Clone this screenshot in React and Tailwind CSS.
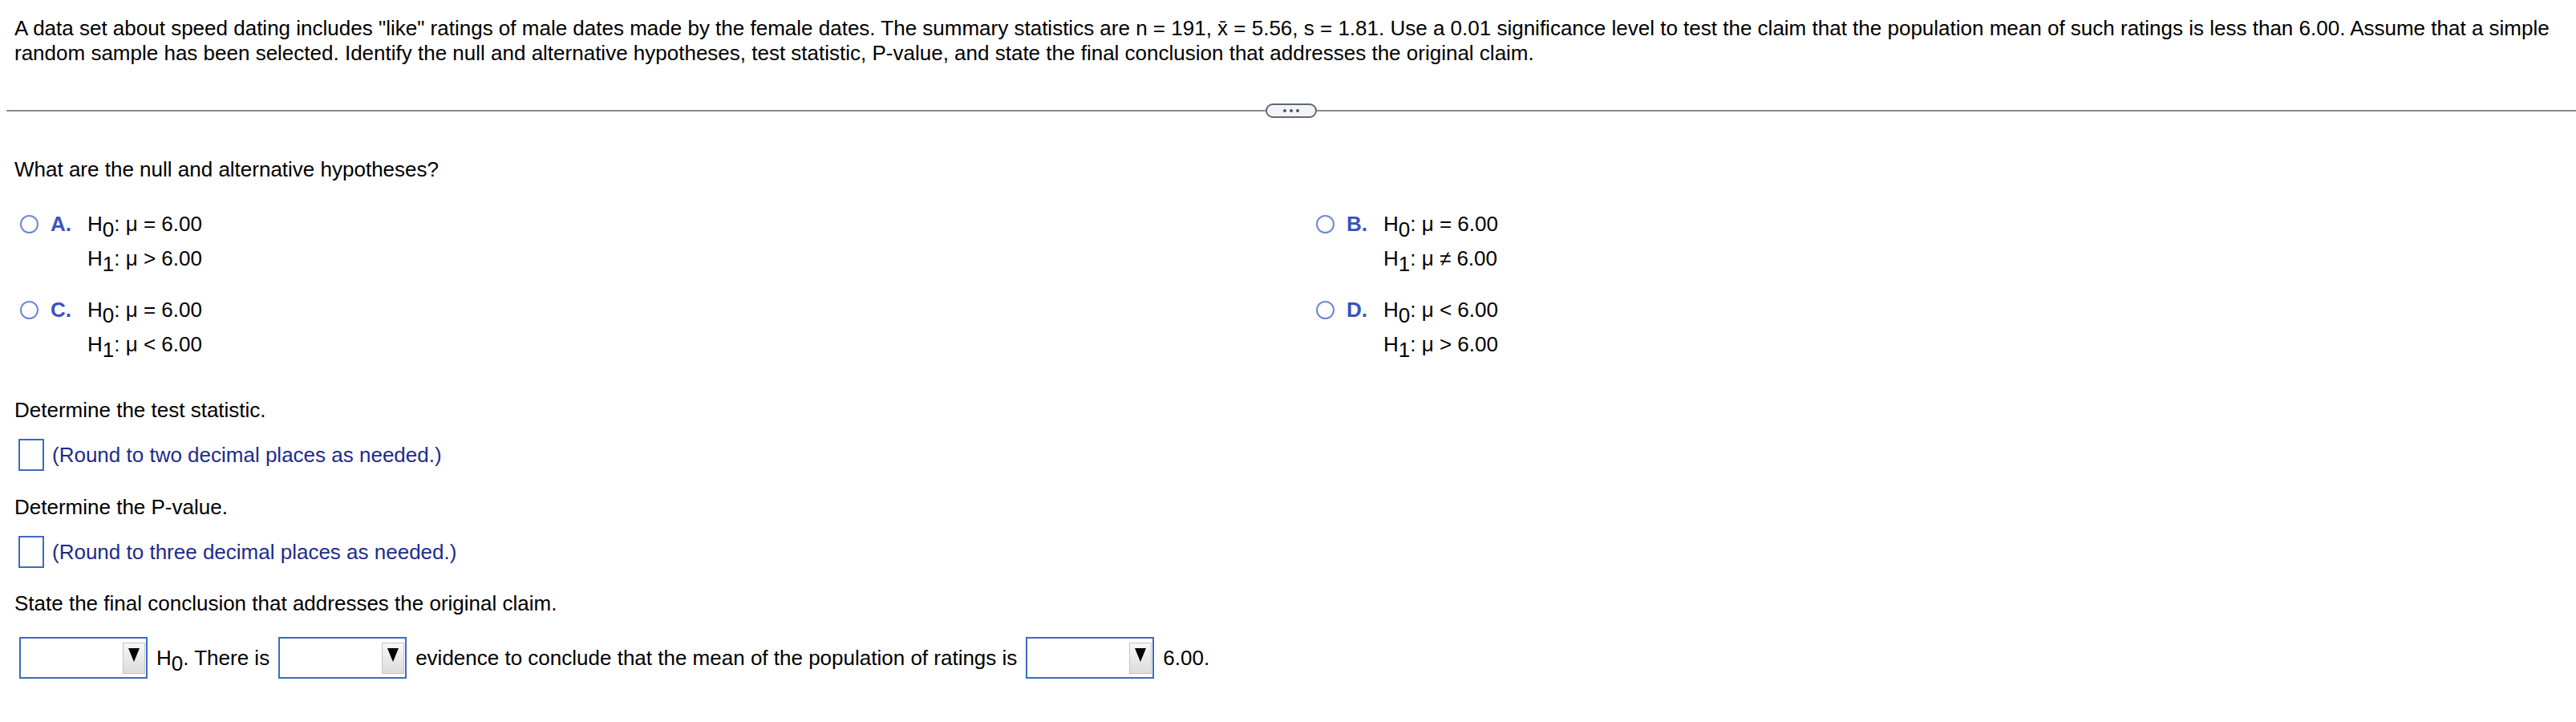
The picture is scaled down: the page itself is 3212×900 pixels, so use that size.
const H = ({ n }) => (
  <span>
    H<span className="relative top-[7px]">{n}</span>
  </span>
);

const Radio = () => (
  <span className="inline-block w-[23px] h-[23px] rounded-full border-[2.5px] border-[#6d88d8] bg-white shrink-0" />
);

const Option = ({ letter, h0, h1 }) => (
  <div className="flex">
    <div className="h-[43px] flex items-center">
      <Radio />
    </div>
    <div className="w-[46px] ml-[15px] font-bold text-[#3853bf]">{letter}.</div>
    <div className="flex flex-col">
      <div>
        <H n="0" />: μ {h0}
      </div>
      <div>
        <H n="1" />: μ {h1}
      </div>
    </div>
  </div>
);

const AnswerBox = ({ hint }) => (
  <div className="flex items-center">
    <div className="ml-[23px] w-[32px] h-[40px] border-2 border-[#3a6bc4] bg-white" />
    <span className="ml-[10px] text-[#1d2b8c]">{hint}</span>
  </div>
);

const Dropdown = () => (
  <div className="relative w-[160px] h-[52px] border-2 border-[#3a6bc4] bg-white shrink-0">
    <div className="absolute right-[1px] top-[5px] w-[28px] h-[39px] border border-[#c4c4c4] bg-gradient-to-b from-[#f7f7f7] to-[#dcdcdc] flex items-start justify-center pt-[4px]">
      <svg width="16" height="20" viewBox="0 0 16 20">
        <polygon points="1,2 15,2 8,19" fill="#000" />
      </svg>
    </div>
  </div>
);

const App = () => {
  return (
    <div
      className="w-[3212px] min-h-[900px] bg-white text-black text-[26px] leading-[31px]"
      style={{ fontFamily: '"Liberation Sans", Arial, sans-serif' }}
    >
      <div className="px-[18px] pt-[20px]">
        <div className="whitespace-nowrap">
          A data set about speed dating includes "like" ratings of male dates made by the female
          dates. The summary statistics are n = 191, x̄ = 5.56, s = 1.81. Use a 0.01 significance
          level to test the claim that the population mean of such ratings is less than 6.00.
          Assume that a simple
        </div>
        <div className="whitespace-nowrap">
          random sample has been selected. Identify the null and alternative hypotheses, test
          statistic, P-value, and state the final conclusion that addresses the original claim.
        </div>
      </div>

      <div className="mt-[47px] ml-[8px] flex items-center h-[18px]">
        <div className="w-[1570px] h-[2px] bg-[#848c99]" />
        <button className="w-[64px] h-[18px] rounded-full border-2 border-[#5f6875] bg-[#f3f4f6] flex items-center justify-center gap-[4px]">
          <span className="w-[4px] h-[4px] rounded-full bg-[#4f5865]" />
          <span className="w-[4px] h-[4px] rounded-full bg-[#4f5865]" />
          <span className="w-[4px] h-[4px] rounded-full bg-[#4f5865]" />
        </button>
        <div className="flex-1 h-[2px] bg-[#848c99]" />
      </div>

      <div className="px-[18px] mt-[49px]">What are the null and alternative hypotheses?</div>

      <div className="mt-[31px] pl-[25px] grid grid-cols-[1616px_1fr] gap-y-[21px] leading-[43px]">
        <Option letter="A" h0="= 6.00" h1="> 6.00" />
        <Option letter="B" h0="= 6.00" h1="≠ 6.00" />
        <Option letter="C" h0="= 6.00" h1="< 6.00" />
        <Option letter="D" h0="< 6.00" h1="> 6.00" />
      </div>

      <div className="px-[18px] mt-[45px]">Determine the test statistic.</div>
      <div className="mt-[20px]">
        <AnswerBox hint="(Round to two decimal places as needed.)" />
      </div>

      <div className="px-[18px] mt-[30px]">Determine the P-value.</div>
      <div className="mt-[20px]">
        <AnswerBox hint="(Round to three decimal places as needed.)" />
      </div>

      <div className="px-[18px] mt-[29px]">State the final conclusion that addresses the original claim.</div>

      <div className="mt-[26px] pl-[24px] flex items-center gap-[11px]">
        <Dropdown />
        <span>
          <H n="0" />. There is
        </span>
        <Dropdown />
        <span>evidence to conclude that the mean of the population of ratings is</span>
        <Dropdown />
        <span>6.00.</span>
      </div>
    </div>
  );
};

export default App;
